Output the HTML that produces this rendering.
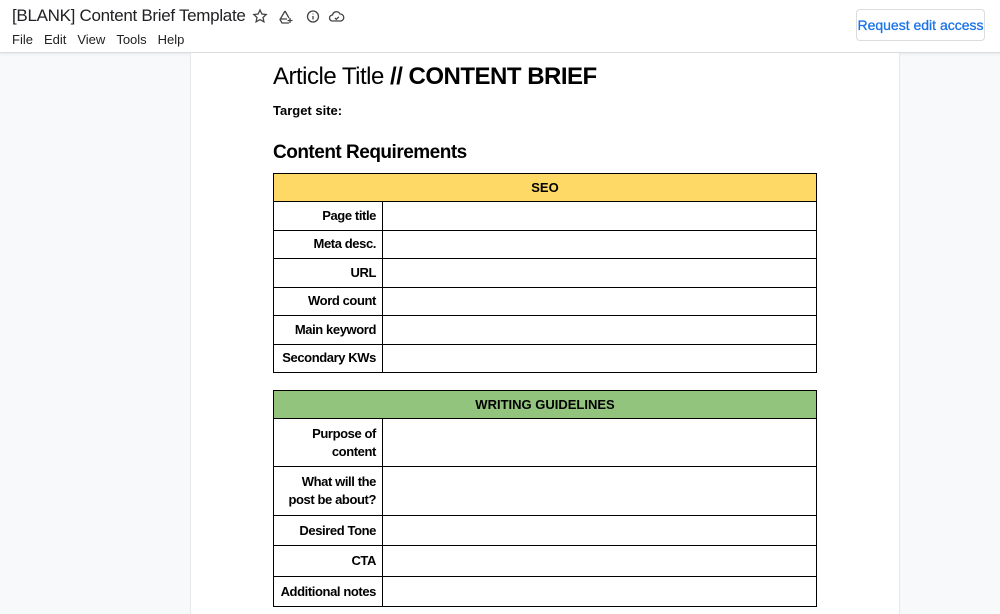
<!DOCTYPE html>
<html><head><style>
*{margin:0;padding:0;box-sizing:border-box}
body{width:1000px;height:614px;overflow:hidden;background:#f8f9fa;font-family:"Liberation Sans",Arial,sans-serif;position:relative}
.hdr{position:absolute;left:0;top:0;width:1000px;height:53px;background:#fff;border-bottom:1px solid #dadce0;box-shadow:0 1px 3px rgba(0,0,0,.08)}
.title{position:absolute;left:12px;top:6px;font-size:17px;color:#202124;white-space:nowrap;letter-spacing:-0.3px}
.menu{position:absolute;left:12px;top:32px;font-size:13px;color:#202124}
.menu span{margin-right:11px}
.icons{position:absolute;left:252px;top:8px}
.btn{position:absolute;left:856px;top:9px;width:129px;height:32px;border:1px solid #dadce0;border-radius:4px;color:#1a73e8;font-size:14px;line-height:30px;text-align:center;-webkit-text-stroke:0.3px #1a73e8;white-space:nowrap}
.page{position:absolute;left:190px;top:53px;width:710px;height:561px;background:#fff;border-left:1px solid #e8e8e8;border-right:1px solid #e8e8e8}
h1{position:absolute;left:273px;top:63px;font-size:24px;font-weight:normal;color:#000;white-space:nowrap;letter-spacing:-0.5px}
.ts{position:absolute;left:273px;top:103px;font-size:13px;font-weight:bold}
h2{position:absolute;left:273px;top:142px;font-size:19px;font-weight:bold;white-space:nowrap;letter-spacing:-0.5px}
table{position:absolute;left:273px;width:544px;border-collapse:collapse;font-size:13px;font-weight:bold;table-layout:fixed}
td{border:1px solid #000;padding:0 6px}
td.l{text-align:right;line-height:18px;letter-spacing:-0.4px}
.n{white-space:nowrap}
.h td{text-align:center}
</style></head><body>
<div class="hdr">
<div class="title">[BLANK] Content Brief Template</div>
<svg class="icons" width="100" height="18" viewBox="0 0 100 18" fill="none" stroke="#444" stroke-width="1.3">
<path d="M8 2l1.9 4 4.3.5-3.2 3 .9 4.3L8 11.6 4.1 13.8l.9-4.3-3.2-3 4.3-.5z"/>
<path d="M33 3l-5 8.5 2 3.5h7M33 3l4 7M29 11h6M38 10v5M35.5 12.5h5"/>
<circle cx="61" cy="8.5" r="5.5"/><path d="M61 8v3.5M61 5.6v.8"/>
<path d="M82 13h-1.5a3 3 0 010-6 4 4 0 017.5-1 3 3 0 01.5 7H82zM83 10l1.3 1.3 2.5-2.5"/>
</svg>
<div class="menu"><span>File</span><span>Edit</span><span>View</span><span>Tools</span><span>Help</span></div>
<div class="btn">Request edit access</div>
</div>
<div class="page"></div>
<h1>Article Title <b>// CONTENT BRIEF</b></h1>
<div class="ts">Target site:</div>
<h2>Content Requirements</h2>
<table style="top:173px">
<colgroup><col style="width:109px"><col></colgroup>
<tr class="h" style="height:28px;background:#ffd966"><td colspan="2">SEO</td></tr>
<tr style="height:28.5px"><td class="l n">Page title</td><td></td></tr>
<tr style="height:28.5px"><td class="l n">Meta desc.</td><td></td></tr>
<tr style="height:28.5px"><td class="l n">URL</td><td></td></tr>
<tr style="height:28.5px"><td class="l n">Word count</td><td></td></tr>
<tr style="height:28.5px"><td class="l n">Main keyword</td><td></td></tr>
<tr style="height:28.5px"><td class="l n">Secondary KWs</td><td></td></tr>
</table>
<table style="top:390px">
<colgroup><col style="width:109px"><col></colgroup>
<tr class="h" style="height:28px;background:#93c47d"><td colspan="2">WRITING GUIDELINES</td></tr>
<tr style="height:48px"><td class="l">Purpose of content</td><td></td></tr>
<tr style="height:49px"><td class="l">What will the post be about?</td><td></td></tr>
<tr style="height:30px"><td class="l n">Desired Tone</td><td></td></tr>
<tr style="height:31px"><td class="l n">CTA</td><td></td></tr>
<tr style="height:30px"><td class="l n">Additional notes</td><td></td></tr>
</table>
</body></html>
